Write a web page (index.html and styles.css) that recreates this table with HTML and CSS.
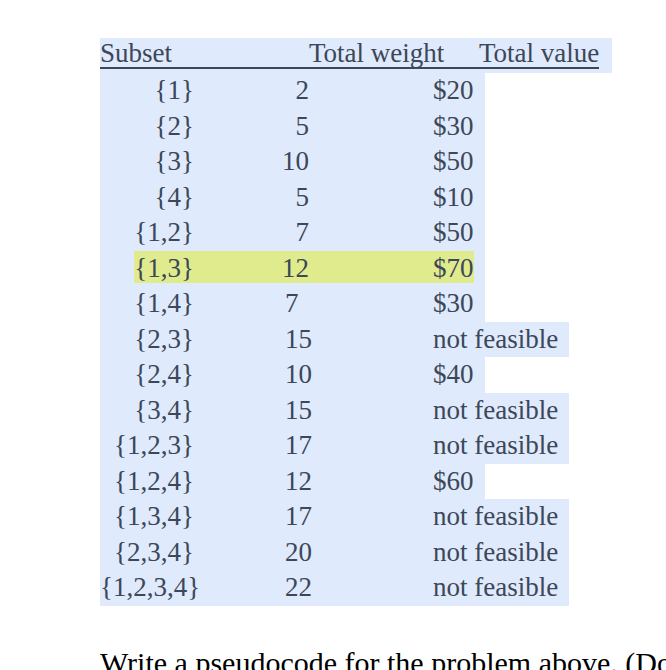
FILE: index.html
```html
<!DOCTYPE html>
<html>
<head>
<meta charset="utf-8">
<link rel="stylesheet" href="styles.css">
</head>
<body>
<div class="doc">
  <div class="table">
    <div class="hd">
      <div class="hd-in">
        <span class="h1">Subset</span>
        <span class="h2">Total weight</span>
        <span class="h3">Total value</span>
      </div>
    </div>
    <div class="row"><span class="c1">{1}</span><span class="c2">2</span><span class="c3">$20</span></div>
    <div class="row"><span class="c1">{2}</span><span class="c2">5</span><span class="c3">$30</span></div>
    <div class="row"><span class="c1">{3}</span><span class="c2">10</span><span class="c3">$50</span></div>
    <div class="row"><span class="c1">{4}</span><span class="c2">5</span><span class="c3">$10</span></div>
    <div class="row"><span class="c1">{1,2}</span><span class="c2">7</span><span class="c3">$50</span></div>
    <div class="row hl"><span class="c1"><span class="mk">{1,3}</span></span><span class="c2">12</span><span class="c3">$70</span></div>
    <div class="row"><span class="c1">{1,4}</span><span class="c2 left">7</span><span class="c3">$30</span></div>
    <div class="row"><span class="c1">{2,3}</span><span class="c2 left">15</span><span class="c3">not feasible</span></div>
    <div class="row"><span class="c1">{2,4}</span><span class="c2 left">10</span><span class="c3">$40</span></div>
    <div class="row"><span class="c1">{3,4}</span><span class="c2 left">15</span><span class="c3">not feasible</span></div>
    <div class="row"><span class="c1">{1,2,3}</span><span class="c2 left">17</span><span class="c3">not feasible</span></div>
    <div class="row"><span class="c1">{1,2,4}</span><span class="c2 left">12</span><span class="c3">$60</span></div>
    <div class="row"><span class="c1">{1,3,4}</span><span class="c2 left">17</span><span class="c3">not feasible</span></div>
    <div class="row"><span class="c1">{2,3,4}</span><span class="c2 left">20</span><span class="c3">not feasible</span></div>
    <div class="row"><span class="c1">{1,2,3,4}</span><span class="c2 left">22</span><span class="c3">not feasible</span></div>
  </div>
  <p class="question">Write a pseudocode for the problem above. (Don't</p>
</div>
</body>
</html>
```

FILE: styles.css
```css
html, body {
  margin: 0;
  padding: 0;
  background: #ffffff;
  overflow: hidden;
}

.doc {
  padding: 38px 0 0 100px;
  font-family: "Liberation Serif", "Times New Roman", serif;
  font-size: 27px;
  color: #3c4758;
}

.table {
  display: flex;
  flex-direction: column;
  align-items: flex-start;
}

.hd {
  background: #dfeafc;
  height: 35px;
  box-sizing: border-box;
  padding-right: 13px;
}

.hd-in {
  display: flex;
  line-height: 27px;
  padding-top: 2px;
  border-bottom: 2px solid #3c4758;
  white-space: nowrap;
}

.h1 { width: 209px; }
.h2 { width: 170px; }
.h3 { width: auto; }

.row {
  display: flex;
  background: #dfeafc;
  line-height: 35.5px;
  height: 35.53px;
  padding-right: 11px;
  white-space: nowrap;
}

.c1 {
  width: 94px;
  text-align: right;
}

.c2 {
  width: 115px;
  text-align: right;
}

.c2.left {
  text-align: left;
  padding-left: 91px;
  width: 24px;
}

.c3 {
  padding-left: 124px;
}

.row.hl .c2,
.row.hl .c3 {
  background: #e0eb8e;
  height: 32px;
}

.row.hl .mk {
  display: inline-block;
  background: #e0eb8e;
  height: 32px;
  vertical-align: top;
}

.question {
  margin: 39px 0 0 0;
  font-size: 30px;
  line-height: 35.5px;
  color: #000000;
  white-space: nowrap;
}
```
